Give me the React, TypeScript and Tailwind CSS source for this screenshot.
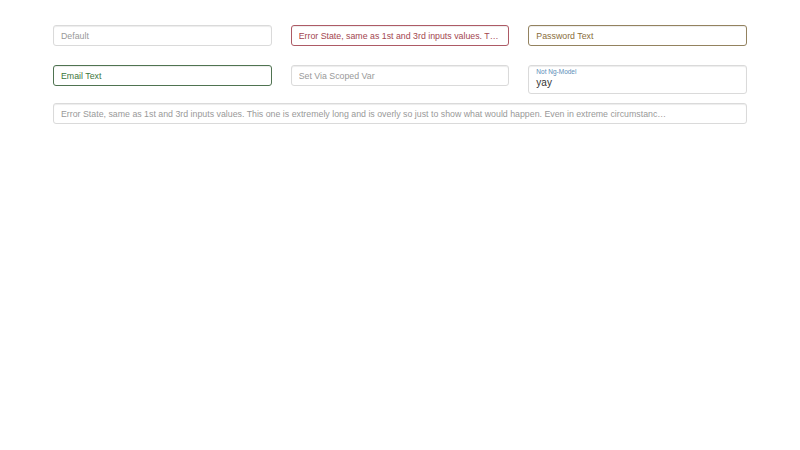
import React from "react";

const base =
  "block h-[21px] w-full rounded-[3px] border bg-white px-[7px] text-[8.8px] leading-[19px] outline-none shadow-[inset_0_1px_1px_rgba(0,0,0,0.075)] truncate";

export default function App() {
  return (
    <div
      className="min-h-[450px] w-full bg-white px-[53px] pt-[25px]"
      style={{ fontFamily: '"Liberation Sans", Arial, sans-serif' }}
    >
      <div className="grid grid-cols-3 gap-x-[19px]">
        <input className={`${base} border-[#dadada] placeholder:text-[#999]`} placeholder="Default" />
        <input
          className={`${base} border-[#ad5a65] text-[#a3464f]`}
          defaultValue="Error State, same as 1st and 3rd inputs values. This one is extremely long"
          style={{ textOverflow: "ellipsis" }}
        />
        <input
          className={`${base} border-[#93825f] text-[#8a6d3b] placeholder:text-[#8a6d3b]`}
          placeholder="Password Text"
        />
      </div>
      <div className="mt-[19px] grid grid-cols-3 items-start gap-x-[19px]">
        <input
          className={`${base} border-[#4f7351] text-[#3c763d] placeholder:text-[#3c763d]`}
          placeholder="Email Text"
        />
        <input className={`${base} border-[#dadada] placeholder:text-[#999]`} placeholder="Set Via Scoped Var" />
        <div className="h-[29px] w-full rounded-[3px] border border-[#dadada] bg-white px-[7px] shadow-[inset_0_1px_1px_rgba(0,0,0,0.075)]">
          <div className="pt-[2px] text-[6.5px] leading-[8px] text-[#5b8db8]">Not Ng-Model</div>
          <div className="text-[10px] leading-[13px] text-[#333]">yay</div>
        </div>
      </div>
      <div className="mt-[9px]">
        <input
          className={`${base} border-[#dadada] placeholder:text-[#999]`}
          placeholder="Error State, same as 1st and 3rd inputs values. This one is extremely long and is overly so just to show what would happen. Even in extreme circumstanc…"
        />
      </div>
    </div>
  );
}
